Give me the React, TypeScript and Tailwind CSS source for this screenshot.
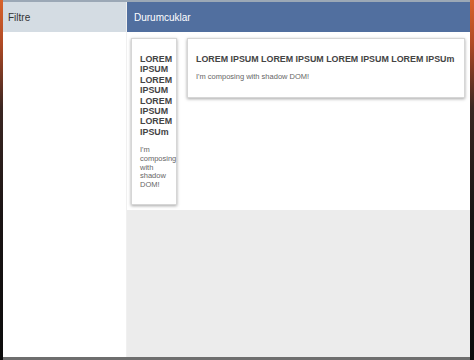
const cards = [
  { id: 1, narrow: true },
  { id: 2, narrow: false },
];

const title = 'LOREM IPSUM LOREM IPSUM LOREM IPSUM LOREM IPSUm';

function Card({ narrow }: { narrow: boolean }) {
  return (
    <div
      className={
        'bg-white border border-[#d6d6d6] shadow-[0_1px_3px_rgba(0,0,0,0.35)] pt-[15px] pb-[15px] ' +
        (narrow ? 'w-[46px] shrink-0 px-[8px]' : 'flex-1 min-w-0 pl-[8px] pr-[4px]')
      }>
      <h3 className="text-[8.9px] font-bold leading-[1.17] text-[#444]">{title}</h3>
      <p className="mt-[9px] text-[7.5px] leading-[1.15] text-[#666]">I&apos;m composing with shadow DOM!</p>
    </div>
  );
}

export default function App() {
  return (
    <div className="h-[360px] w-full flex pl-[3px] pr-[4px] bg-[linear-gradient(180deg,#d8632c_0%,#b04a25_12%,#3a2622_30%,#1a1414_60%,#0c0c0c_100%)] font-['Liberation_Sans',Arial,sans-serif]">
      <div className="flex flex-1 border-t-2 border-t-[#9ba8b6] border-b-[3px] border-b-[#6e6e6e]">
        <aside className="w-[124px] flex flex-col bg-white border-r border-r-[#f0f0f0]">
          <div className="h-[30px] flex items-center px-[5px] bg-[#d4dce3] text-[10px] text-[#333]">Filtre</div>
          <div className="flex-1" />
        </aside>

        <main className="flex flex-1 flex-col bg-[#ececec]">
          <div className="h-[30px] flex items-center px-[7px] bg-[#516f9f] text-[10px] text-white">Durumcuklar</div>
          <div className="flex items-start gap-[10px] bg-white pt-[6px] pl-[4px] pr-[5px] pb-[5px]">
            {cards.map((c) => (
              <Card key={c.id} narrow={c.narrow} />
            ))}
          </div>
          <div className="flex-1" />
        </main>
      </div>
    </div>
  );
}
